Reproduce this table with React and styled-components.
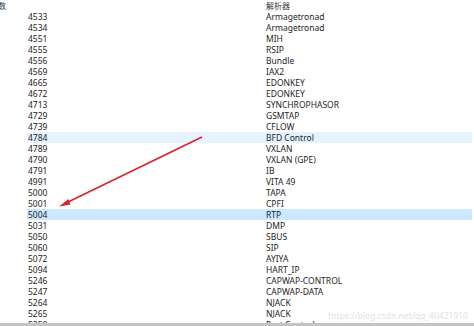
import React from "react";
import styled, { createGlobalStyle } from "styled-components";

const Global = createGlobalStyle`
  html, body { margin: 0; padding: 0; background: #fff; }
  body { font-family: "Noto Sans", "Noto Sans CJK SC", sans-serif; }
`;

const Page = styled.div`
  position: relative;
  width: 474px;
  height: 326px;
  display: flex;
  flex-direction: column;
  overflow: hidden;
  background: #fff;
  color: #1e1e1e;
  font-size: 8.5px;
`;

const List = styled.div`
  flex: 1;
  overflow: hidden;
  display: flex;
  flex-direction: column;
`;

const Header = styled.div`
  display: grid;
  grid-template-columns: 268px 1fr;
  height: 11.5px;
  line-height: 11px;
  font-size: 8px;
  color: #333;
  margin-left: -2px;
`;

const HeadCell = styled.div`
  white-space: nowrap;
  overflow: hidden;
`;

const Row = styled.div`
  display: grid;
  grid-template-columns: 238px 1fr;
  height: 11px;
  line-height: 11px;
  margin-left: 27px;
  width: 445px;
  flex: none;
  background: ${(p) =>
    p.$state === "selected" ? "#cce8ff" : p.$state === "hover" ? "#e5f3ff" : "transparent"};
`;

const Cell = styled.div`
  padding-left: 1px;
  white-space: nowrap;
`;

const BottomBar = styled.div`
  height: 3px;
  flex: none;
  background: #c4c4c4;
`;

const Watermark = styled.div`
  position: absolute;
  right: 6px;
  bottom: 5px;
  font-size: 8.5px;
  color: #e2e2e2;
  white-space: nowrap;
`;

const ArrowLayer = styled.svg`
  position: absolute;
  left: 0;
  top: 0;
  pointer-events: none;
`;

const rows = [
  ["4533", "Armagetronad"],
  ["4534", "Armagetronad"],
  ["4551", "MIH"],
  ["4555", "RSIP"],
  ["4556", "Bundle"],
  ["4569", "IAX2"],
  ["4665", "EDONKEY"],
  ["4672", "EDONKEY"],
  ["4713", "SYNCHROPHASOR"],
  ["4729", "GSMTAP"],
  ["4739", "CFLOW"],
  ["4784", "BFD Control", "hover"],
  ["4789", "VXLAN"],
  ["4790", "VXLAN (GPE)"],
  ["4791", "IB"],
  ["4991", "VITA 49"],
  ["5000", "TAPA"],
  ["5001", "CPFI"],
  ["5004", "RTP", "selected"],
  ["5031", "DMP"],
  ["5050", "SBUS"],
  ["5060", "SIP"],
  ["5072", "AYIYA"],
  ["5094", "HART_IP"],
  ["5246", "CAPWAP-CONTROL"],
  ["5247", "CAPWAP-DATA"],
  ["5264", "NJACK"],
  ["5265", "NJACK"],
  ["5250", "Port Control"],
];

export default function App() {
  return (
    <Page>
      <Global />
      <List>
        <Header>
          <HeadCell>数</HeadCell>
          <HeadCell>解析器</HeadCell>
        </Header>
        {rows.map(([port, name, state]) => (
          <Row key={port + name} $state={state}>
            <Cell>{port}</Cell>
            <Cell>{name}</Cell>
          </Row>
        ))}
      </List>
      <BottomBar />
      <Watermark>https://blog.csdn.net/qq_40421910</Watermark>
      <ArrowLayer width="474" height="326" viewBox="0 0 474 326">
        <line x1="202" y1="137" x2="66" y2="203" stroke="#d9232b" strokeWidth="1.6" />
        <polygon points="59,206.5 68.5,199 70.5,204.5" fill="#d9232b" />
      </ArrowLayer>
    </Page>
  );
}
